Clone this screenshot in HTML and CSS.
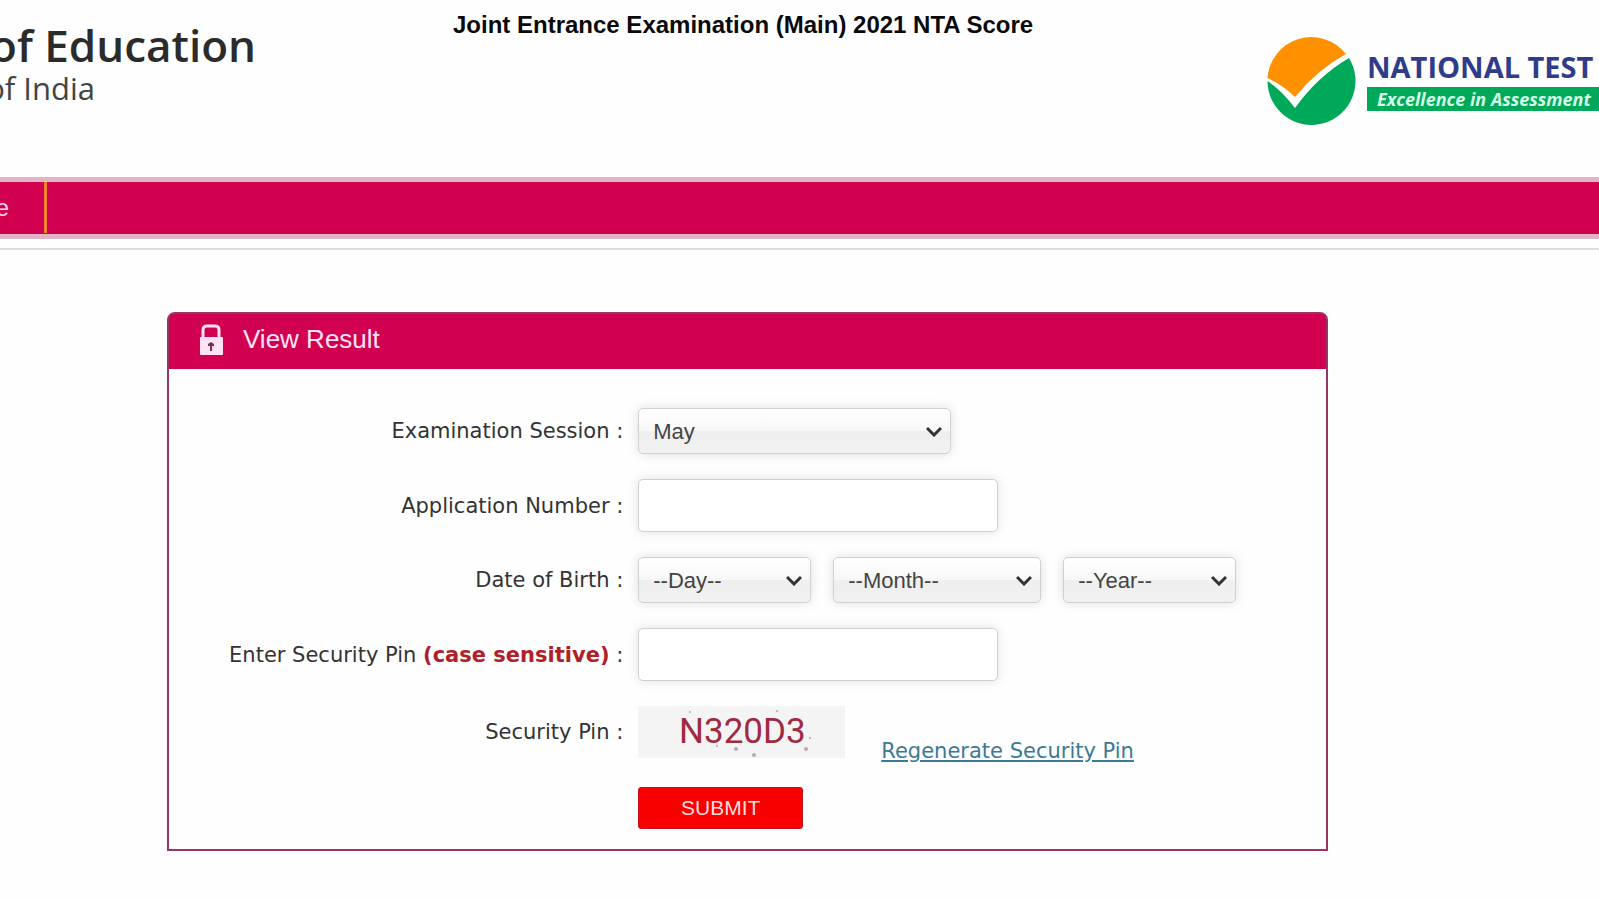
FILE: index.html
```
<!DOCTYPE html>
<html lang="en">
<head>
  <meta charset="UTF-8">
  <meta name="viewport" content="width=device-width, initial-scale=1.0">
  <title>JEE (Main) 2021 - View Result</title>
  <link rel="stylesheet" href="styles.css">
</head>
<body>
  <header class="header">
    <div class="ministry">
      <div class="ministry-name">of Education</div>
      <div class="ministry-sub">of India</div>
    </div>
    <h1 class="title">Joint Entrance Examination (Main) 2021 NTA Score</h1>
    <div class="logo">
      <svg class="logo-mark" width="90" height="90" viewBox="0 0 90 90" aria-hidden="true">
        <path d="M1.500 43 A44 44 0 0 1 80 19 Q52 34 29 62 Q17 50 1.500 43 Z" fill="#ff9000"/>
        <path d="M1.500 46 Q16 56 29 73 Q52 41 83 23 A44 44 0 1 1 1.500 46 Z" fill="#00a859"/>
      </svg>
      <div class="logo-text">
        <div class="logo-name">NATIONAL TEST</div>
        <div class="logo-tag">Excellence in Assessment</div>
      </div>
    </div>
  </header>

  <nav class="navbar">
    <a class="nav-link" href="#">e</a>
  </nav>
  <hr class="divider">

  <main class="panel">
    <h2 class="panel-head">
      <svg width="24" height="32" viewBox="0 0 24 32" aria-hidden="true">
        <path d="M4 14 V6 Q4 2 8 2 H16 Q20 2 20 6 V14" fill="none" stroke="#ffe3f4" stroke-width="3"/>
        <rect x="1" y="13" width="23" height="18" rx="1" fill="#ffe3f4"/>
        <path d="M9 20 L12 18 L15 20 V22 H13 V27 H11 V22 H9 Z" fill="#7a3050"/>
      </svg>
      View Result
    </h2>
    <form class="form">
      <label class="label" for="session">Examination Session :</label>
      <div class="field">
        <select class="select session" id="session"><option>May</option></select>
      </div>

      <label class="label" for="appno">Application Number :</label>
      <div class="field">
        <input class="input" type="text" id="appno">
      </div>

      <label class="label" for="day">Date of Birth :</label>
      <div class="field">
        <select class="select day" id="day"><option>--Day--</option></select>
        <select class="select month" aria-label="Month"><option>--Month--</option></select>
        <select class="select year" aria-label="Year"><option>--Year--</option></select>
      </div>

      <label class="label" for="pin">Enter Security Pin <b class="note">(case sensitive)</b> :</label>
      <div class="field">
        <input class="input" type="text" id="pin">
      </div>

      <div class="label">Security Pin :</div>
      <div class="field pin-row">
        <svg class="captcha" width="207" height="52" viewBox="0 0 207 52">
          <text x="41" y="37">N320D3</text>
          <g fill="#b9a9b0">
            <circle cx="52" cy="6" r="1"/>
            <circle cx="79" cy="40" r="1"/>
            <circle cx="98" cy="43" r="2"/>
            <circle cx="116" cy="49" r="2"/>
            <circle cx="168" cy="43" r="2"/>
            <circle cx="172" cy="32" r="1"/>
            <circle cx="139" cy="5" r="1"/>
          </g>
        </svg>
        <a class="regen" href="#">Regenerate Security Pin</a>
      </div>

      <div class="field actions">
        <button class="submit" type="submit">SUBMIT</button>
      </div>
    </form>
  </main>
</body>
</html>
```
FILE: styles.css
```
* {
  box-sizing: border-box;
}
body {
  margin: 0;
  font-family: "Liberation Sans", Arial, sans-serif;
  background-color: #fefefe;
  overflow-x: hidden;
}
.header {
  display: flex;
  justify-content: space-between;
  align-items: flex-start;
  height: 177px;
  overflow: hidden;
}
/* left and right blocks run past the window edges */
.ministry {
  width: 453px;
  padding-top: 19px;
  font-family: "Open Sans", sans-serif;
  color: #2b2b2b;
}
.ministry-name,
.ministry-sub {
  display: flex;
  justify-content: flex-end;
  white-space: nowrap;
}
.ministry-name {
  width: 256px;
  font-size: 44px;
  font-weight: 600;
  line-height: 52px;
}
.ministry-sub {
  width: 95px;
  font-size: 31px;
  line-height: 34px;
  color: #444;
}
.title {
  margin: 0;
  padding-top: 11px;
  font-size: 24px;
  line-height: 28px;
  color: #0a0a0a;
  white-space: nowrap;
}
.logo {
  display: flex;
  gap: 11px;
  width: 333px;
  margin-left: auto;
  padding-top: 35px;
  overflow: hidden;
}
.logo-mark {
  flex: none;
}
.logo-text {
  flex: 1;
  padding-top: 15px;
  white-space: nowrap;
}
.logo-name {
  font-family: "Open Sans", sans-serif;
  font-size: 29px;
  font-weight: 700;
  line-height: 34px;
  color: #2f3c8a;
}
.logo-tag {
  margin-top: 3px;
  padding-left: 10px;
  background-color: #00a859;
  font-family: "Open Sans", sans-serif;
  font-size: 18px;
  font-weight: 700;
  font-style: italic;
  line-height: 24px;
  color: #d4ffe6;
}
.navbar {
  height: 62px;
  background-color: #d10050;
  border-top: 5px solid #dfb5c6;
  border-bottom: 5px solid #dfb5c6;
}
.nav-link {
  display: flex;
  align-items: center;
  justify-content: flex-end;
  width: 47px;
  height: 51px;
  padding-right: 35px;
  border-right: 3px solid #f5832f;
  font-size: 24px;
  color: #ffd9ec;
  text-decoration: none;
}
.divider {
  height: 2px;
  margin: 9px 0 0;
  border: none;
  background-color: #dedede;
}
.panel {
  margin: 62px 271px 0 167px;
  border: 2px solid #983468;
  border-radius: 8px 8px 0 0;
}
.panel-head {
  display: flex;
  align-items: center;
  gap: 20px;
  height: 55px;
  margin: 0;
  padding: 0 0 4px 30px;
  background-color: #d10050;
  border-radius: 5px 5px 0 0;
  font-size: 26px;
  font-weight: 400;
  color: #ffe3f4;
}
.form {
  display: grid;
  grid-template-columns: 39% 1fr;
  column-gap: 15px;
  row-gap: 25px;
  align-items: center;
  padding: 39px 0 20px 5px;
}
.label {
  font-family: "DejaVu Sans", Verdana, sans-serif;
  font-size: 21px;
  text-align: right;
  color: #333;
  white-space: nowrap;
}
.note {
  color: #b0202a;
}
.field {
  display: flex;
  gap: 22px;
}
.select,
.input {
  border: 1px solid #d0d0d0;
  border-radius: 5px;
  box-shadow: 0 0 12px rgba(0, 0, 0, 0.12);
  font-family: inherit;
  font-size: 22px;
  color: #444;
}
.select {
  height: 46px;
  padding: 0 14px;
  appearance: none;
  background: url("data:image/svg+xml,%3Csvg xmlns='http://www.w3.org/2000/svg' width='16' height='11'%3E%3Cpath d='M1 2 L8 9 L15 2' fill='none' stroke='%23333' stroke-width='3'/%3E%3C/svg%3E") no-repeat right 8px center,
    linear-gradient(#fff 0%, #f7f7f7 50%, #efefef 51%, #f1f1f1 100%);
}
.session {
  width: 313px;
}
.day,
.year {
  width: 173px;
}
.month {
  width: 208px;
}
.input {
  width: 360px;
  height: 53px;
  padding: 0 14px;
  background-color: #fff;
}
.pin-row {
  gap: 36px;
  align-items: flex-end;
}
.captcha {
  background-color: #f4f4f4;
  font-family: Roboto, sans-serif;
  font-size: 35px;
  fill: #a02b40;
}
.regen {
  font-family: "DejaVu Sans", Verdana, sans-serif;
  font-size: 21px;
  line-height: 26px;
  margin-bottom: -6px;
  color: #3c7a94;
}
.actions {
  grid-column: 2;
  padding-top: 4px;
}
.submit {
  width: 165px;
  height: 42px;
  border: 1px solid #c8101a;
  border-radius: 3px;
  background-color: #f80000;
  font-family: inherit;
  font-size: 21px;
  color: #ffdcdc;
  cursor: pointer;
}
```
